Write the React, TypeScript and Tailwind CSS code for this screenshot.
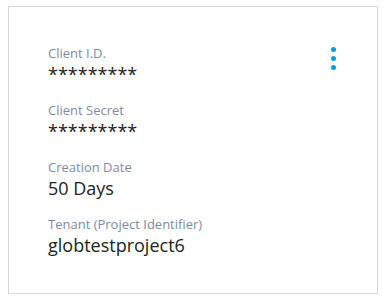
import React from "react";

const items = [
  { label: "Client I.D.", value: "*********" },
  { label: "Client Secret", value: "*********" },
  { label: "Creation Date", value: "50 Days" },
  { label: "Tenant (Project Identifier)", value: "globtestproject6" },
];

const App: React.FC = () => {
  return (
    <div className="min-h-screen bg-white pt-[6px] pl-[8px] font-['Open_Sans',sans-serif]">
      <div className="relative w-[370px] h-[288px] border border-[#d6d6d6] bg-white pl-[39px] pt-[37px]">
        {/* kebab menu */}
        <button className="absolute left-[322px] top-[40px] flex flex-col items-center gap-[4px] p-0">
          <span className="block w-[5px] h-[5px] rounded-full bg-[#0a9be3]"></span>
          <span className="block w-[5px] h-[5px] rounded-full bg-[#0a9be3]"></span>
          <span className="block w-[5px] h-[5px] rounded-full bg-[#0a9be3]"></span>
        </button>

        <div className="flex flex-col gap-[14px]">
          {items.map((item) => (
            <div key={item.label} className="flex flex-col">
              <span className="text-[13px] leading-[18px] text-[#7d8ca0]">{item.label}</span>
              <span className="text-[18px] leading-[25px] text-[#222222]">{item.value}</span>
            </div>
          ))}
        </div>
      </div>
    </div>
  );
};

export default App;
